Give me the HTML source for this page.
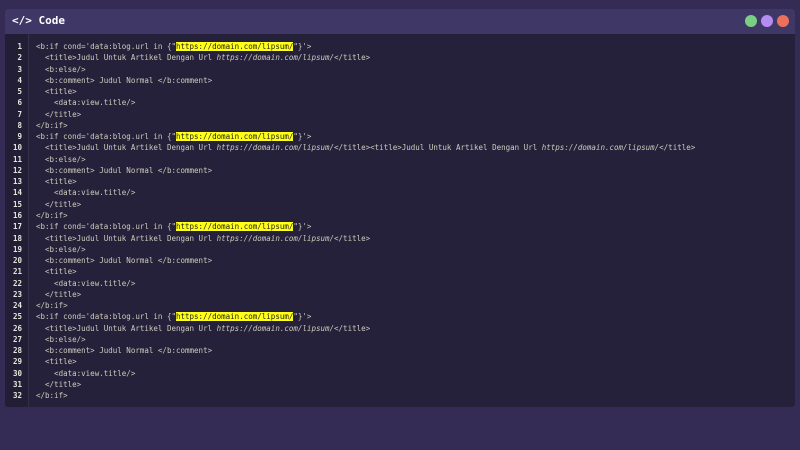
<!DOCTYPE html>
<html><head><meta charset="utf-8"><style>
html,body{margin:0;padding:0;width:800px;height:450px;background:#342c54;overflow:hidden}
.card{position:absolute;left:5px;top:9px;width:790px;height:398px;background:#25213a;border-radius:3px;overflow:hidden}
.hdr{height:25px;background:#3f3766;position:relative}
.hdr .t{position:absolute;left:7px;top:5px;font:bold 11px "DejaVu Sans Mono","Liberation Mono",monospace;color:#fff}
.dot{position:absolute;top:6px;width:12px;height:12px;border-radius:50%}
.gut{position:absolute;left:0;top:25px;width:23px;bottom:0;border-right:1px solid #34304a;background:#221e35}
pre{margin:0;font:7.5px/11.26px "DejaVu Sans Mono","Liberation Mono",monospace;color:#cfcbbd;white-space:pre}
.nums{position:absolute;left:0;top:32px;width:17px;text-align:right;color:#e8e6dc;font-weight:bold}
.code{position:absolute;left:31px;top:32px}
.h{background:#ffff1a;color:#222}
i{font-style:italic}
</style></head><body>
<div class="card">
<div class="hdr"><span class="t">&lt;/&gt; Code</span>
<span class="dot" style="left:740px;background:#7acf85"></span>
<span class="dot" style="left:756px;background:#b48cf2"></span>
<span class="dot" style="left:772px;background:#ec715b"></span></div>
<div class="gut"></div>
<pre class="nums">1
2
3
4
5
6
7
8
9
10
11
12
13
14
15
16
17
18
19
20
21
22
23
24
25
26
27
28
29
30
31
32</pre>
<pre class="code">&lt;b:if cond='data:blog.url in {"<span class="h">https://domain.com/lipsum/</span>"}'&gt;
  &lt;title&gt;Judul Untuk Artikel Dengan Url <i>https://domain.com/lipsum/</i>&lt;/title&gt;
  &lt;b:else/&gt;
  &lt;b:comment&gt; Judul Normal &lt;/b:comment&gt;
  &lt;title&gt;
    &lt;data:view.title/&gt;
  &lt;/title&gt;
&lt;/b:if&gt;
&lt;b:if cond='data:blog.url in {"<span class="h">https://domain.com/lipsum/</span>"}'&gt;
  &lt;title&gt;Judul Untuk Artikel Dengan Url <i>https://domain.com/lipsum/</i>&lt;/title&gt;&lt;title&gt;Judul Untuk Artikel Dengan Url <i>https://domain.com/lipsum/</i>&lt;/title&gt;
  &lt;b:else/&gt;
  &lt;b:comment&gt; Judul Normal &lt;/b:comment&gt;
  &lt;title&gt;
    &lt;data:view.title/&gt;
  &lt;/title&gt;
&lt;/b:if&gt;
&lt;b:if cond='data:blog.url in {"<span class="h">https://domain.com/lipsum/</span>"}'&gt;
  &lt;title&gt;Judul Untuk Artikel Dengan Url <i>https://domain.com/lipsum/</i>&lt;/title&gt;
  &lt;b:else/&gt;
  &lt;b:comment&gt; Judul Normal &lt;/b:comment&gt;
  &lt;title&gt;
    &lt;data:view.title/&gt;
  &lt;/title&gt;
&lt;/b:if&gt;
&lt;b:if cond='data:blog.url in {"<span class="h">https://domain.com/lipsum/</span>"}'&gt;
  &lt;title&gt;Judul Untuk Artikel Dengan Url <i>https://domain.com/lipsum/</i>&lt;/title&gt;
  &lt;b:else/&gt;
  &lt;b:comment&gt; Judul Normal &lt;/b:comment&gt;
  &lt;title&gt;
    &lt;data:view.title/&gt;
  &lt;/title&gt;
&lt;/b:if&gt;</pre>
</div>
</body></html>
